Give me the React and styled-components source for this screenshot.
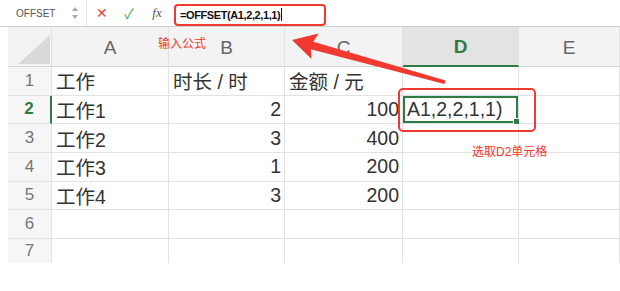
import React from 'react';
import styled, { createGlobalStyle, css } from 'styled-components';

const GlobalStyle = createGlobalStyle`
  html, body { margin: 0; padding: 0; background: #fff; }
  body { font-family: "Liberation Sans", "Noto Sans CJK SC", sans-serif; }
`;

const RED = '#f0392f';
const GREEN = '#2f7a45';

const Page = styled.div`
  position: relative;
  width: 620px;
  height: 291px;
  background: #fff;
  overflow: hidden;
`;

const FormulaBar = styled.div`
  display: flex;
  align-items: center;
  height: 26px;
  border-bottom: 1px solid #cfcfcf;
  box-sizing: content-box;
`;

const NameBox = styled.div`
  width: 56px;
  padding-left: 16px;
  box-sizing: border-box;
  font-size: 10px;
  color: #555;
`;

const Stepper = styled.svg`
  display: block;
  margin-left: 16px;
`;

const Divider = styled.div`
  width: 1px;
  height: 26px;
  background: #e6e6e6;
  margin-left: 8px;
`;

const ToolIcon = styled.span`
  display: inline-flex;
  align-items: center;
  justify-content: center;
  width: 14px;
  margin-left: ${p => p.$gap}px;
  color: ${p => p.$color};
  font-size: 14px;
  ${p => p.$fx && css`
    font-family: "Liberation Serif", serif;
    font-style: italic;
    font-size: 13px;
  `}
`;

const FormulaInput = styled.div`
  display: flex;
  align-items: center;
  width: 152px;
  height: 22px;
  margin-left: 10px;
  margin-top: 3px;
  padding-left: 4px;
  box-sizing: border-box;
  border: 2px solid ${RED};
  border-radius: 4px;
  font-size: 11px;
  font-weight: 700;
  letter-spacing: -0.4px;
  color: #111;
`;

const Caret = styled.span`
  display: inline-block;
  width: 1px;
  height: 13px;
  margin-left: 1px;
  background: #111;
`;

const Sheet = styled.div`
  display: grid;
  margin-left: 8px;
  grid-template-columns: 44px 117px 116px 118px 116px 101px;
  grid-template-rows: 40px repeat(6, 28.67px) 24px;
  overflow: hidden;
`;

const Corner = styled.div`
  position: relative;
  background: #f3f3f3;
  border-right: 1px solid #e2e2e2;
  border-bottom: 1px solid #d6d6d6;
  &::after {
    content: '';
    position: absolute;
    left: 10px;
    top: 8px;
    width: 32px;
    height: 29px;
    background: #d9d9d9;
    clip-path: polygon(100% 0, 100% 100%, 0 100%);
  }
`;

const ColHead = styled.div`
  display: flex;
  align-items: center;
  justify-content: center;
  background: ${p => (p.$active ? '#e3e3e3' : '#f3f3f3')};
  border-right: 1px solid #e2e2e2;
  border-bottom: ${p => (p.$active ? `2px solid ${GREEN}` : '1px solid #d6d6d6')};
  font-size: 19px;
  color: ${p => (p.$active ? GREEN : '#666')};
  font-weight: ${p => (p.$active ? 700 : 400)};
  padding-top: 2px;
`;

const RowHead = styled.div`
  display: flex;
  align-items: center;
  justify-content: center;
  background: #f6f6f6;
  border-right: ${p => (p.$active ? `2px solid ${GREEN}` : '1px solid #e2e2e2')};
  border-bottom: ${p => (p.$last ? 'none' : '1px solid #e2e2e2')};
  font-size: 17px;
  color: ${p => (p.$active ? GREEN : '#777')};
  font-weight: ${p => (p.$active ? 700 : 400)};
`;

const Cell = styled.div`
  position: relative;
  display: flex;
  align-items: center;
  justify-content: ${p => (p.$num ? 'flex-end' : 'flex-start')};
  padding: 0 3px 0 4px;
  border-right: 1px solid #e2e2e2;
  border-bottom: ${p => (p.$last ? 'none' : '1px solid #e2e2e2')};
  font-size: 19.5px;
  color: #333;
  white-space: nowrap;
  overflow: visible;
  ${p => p.$selected && css`
    box-shadow: inset 0 0 0 2px ${GREEN};
    &::after {
      content: '';
      position: absolute;
      right: -2px;
      bottom: -2px;
      width: 5px;
      height: 5px;
      background: ${GREEN};
      border: 1px solid #fff;
    }
  `}
`;

const Note = styled.div`
  position: absolute;
  left: ${p => p.$x}px;
  top: ${p => p.$y}px;
  font-size: 12px;
  color: ${RED};
  white-space: nowrap;
`;

const Frame = styled.div`
  position: absolute;
  left: 398px;
  top: 88px;
  width: 138px;
  height: 44px;
  box-sizing: border-box;
  border: 2px solid ${RED};
  border-radius: 5px;
`;

const Overlay = styled.svg`
  position: absolute;
  left: 0;
  top: 0;
  pointer-events: none;
`;

const columns = ['A', 'B', 'C', 'D', 'E'];

const rows = [
  ['工作', '时长 / 时', '金额 / 元', '', ''],
  ['工作1', 2, 100, 'A1,2,2,1,1)', ''],
  ['工作2', 3, 400, '', ''],
  ['工作3', 1, 200, '', ''],
  ['工作4', 3, 200, '', ''],
  ['', '', '', '', ''],
  ['', '', '', '', ''],
];

export default function App() {
  return (
    <>
      <GlobalStyle />
      <Page>
        <FormulaBar>
          <NameBox>OFFSET</NameBox>
          <Stepper width="6" height="14" viewBox="0 0 6 14">
            <polygon points="3,1 6,5 0,5" fill="#a9a9a9" />
            <polygon points="0,9 6,9 3,13" fill="#a9a9a9" />
          </Stepper>
          <Divider />
          <ToolIcon $gap={8} $color="#e0443e">✕</ToolIcon>
          <ToolIcon $gap={13} $color="#3da651">✓</ToolIcon>
          <ToolIcon $gap={14} $color="#555" $fx>fx</ToolIcon>
          <FormulaInput>
            =OFFSET(A1,2,2,1,1)
            <Caret />
          </FormulaInput>
        </FormulaBar>

        <Sheet>
          <Corner />
          {columns.map(c => (
            <ColHead key={c} $active={c === 'D'}>{c}</ColHead>
          ))}
          {rows.map((row, i) => (
            <React.Fragment key={i}>
              <RowHead $active={i === 1} $last={i === rows.length - 1}>{i + 1}</RowHead>
              {row.map((v, j) => (
                <Cell
                  key={j}
                  $num={typeof v === 'number'}
                  $selected={i === 1 && j === 3}
                  $last={i === rows.length - 1}
                >
                  {v}
                </Cell>
              ))}
            </React.Fragment>
          ))}
        </Sheet>

        <Note $x={158} $y={34}>输入公式</Note>
        <Frame />
        <Note $x={472} $y={142}>选取D2单元格</Note>

        <Overlay width="620" height="291" viewBox="0 0 620 291">
          <polygon
            fill={RED}
            points="292,40 318.5,33.5 313.3,41.8 445.6,80.4 444.4,84 310.8,49.3 311.5,59"
          />
        </Overlay>
      </Page>
    </>
  );
}
